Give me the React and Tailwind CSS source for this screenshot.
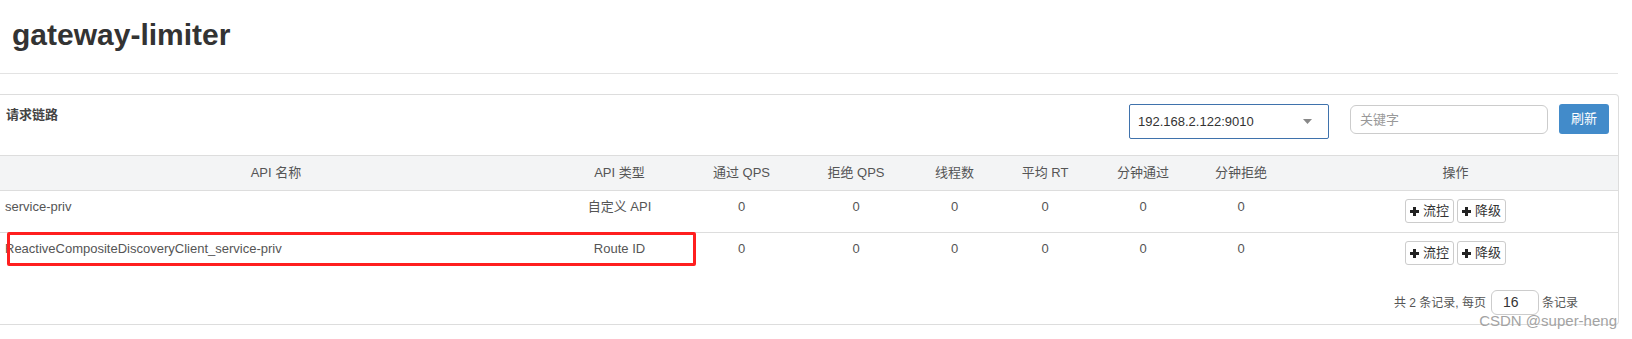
const columns = [
  { key: "name", label: "API 名称" },
  { key: "type", label: "API 类型" },
  { key: "passQps", label: "通过 QPS" },
  { key: "blockQps", label: "拒绝 QPS" },
  { key: "threads", label: "线程数" },
  { key: "rt", label: "平均 RT" },
  { key: "passMin", label: "分钟通过" },
  { key: "blockMin", label: "分钟拒绝" },
  { key: "ops", label: "操作" },
];

const rows = [
  { name: "service-priv", type: "自定义 API", passQps: 0, blockQps: 0, threads: 0, rt: 0, passMin: 0, blockMin: 0 },
  { name: "ReactiveCompositeDiscoveryClient_service-priv", type: "Route ID", passQps: 0, blockQps: 0, threads: 0, rt: 0, passMin: 0, blockMin: 0, marked: true },
];

const gridCols = "grid grid-cols-[552px_135px_109px_120px_77px_104px_92px_104px_1fr]";

function PlusIcon() {
  return (
    <svg width="9" height="9" viewBox="0 0 9 9" className="shrink-0">
      <rect x="3" y="0" width="3" height="9" fill="#222" />
      <rect x="0" y="3" width="9" height="3" fill="#222" />
    </svg>
  );
}

function OpButton({ label }) {
  return (
    <button className="h-[24px] w-[49px] flex items-center justify-center gap-[4px] border border-[#ccc] rounded-[3px] bg-white text-[13px] text-[#333]">
      <PlusIcon />
      <span>{label}</span>
    </button>
  );
}

export default function App() {
  return (
    <div className="relative w-[1632px] h-[339px] overflow-hidden bg-white font-['Liberation_Sans','Noto_Sans_CJK_SC',sans-serif]">
      <div className="h-[73px] pt-[18px] pl-[12px]">
        <h1 className="text-[30px] leading-[33px] font-bold text-[#333]">gateway-limiter</h1>
      </div>
      <div className="h-px w-[1618px] bg-[#e3e3e3]" />

      <div className="mt-[20px] w-[1619px] border border-l-0 border-[#ddd] rounded-r-[4px]">
        <div className="h-[60px] flex items-start justify-between pl-[6px] pr-[9px] pt-[9px]">
          <div className="mt-[2px] text-[13px] leading-[18px] font-bold text-[#444]">请求链路</div>
          <div className="flex items-start">
            <div className="w-[200px] h-[35px] border border-[#3f72ac] rounded-[2px] flex items-center justify-between pl-[8px] pr-[16px]">
              <span className="text-[13px] text-[#333]">192.168.2.122:9010</span>
              <svg width="9" height="5" viewBox="0 0 9 5"><path d="M0 0h9L4.5 5z" fill="#888" /></svg>
            </div>
            <div className="ml-[21px] mt-px w-[198px] h-[29px] border border-[#ccc] rounded-[6px] flex items-center pl-[9px]">
              <span className="text-[13px] text-[#999]">关键字</span>
            </div>
            <button className="ml-[11px] w-[50px] h-[30px] bg-[#428bca] rounded-[3px] text-white text-[13px]">刷新</button>
          </div>
        </div>

        <div className={`${gridCols} h-[36px] border-y border-[#ddd] bg-[#f3f4f5] text-[13px] text-[#555]`}>
          {columns.map((c) => (
            <div key={c.key} className="flex items-center justify-center">{c.label}</div>
          ))}
        </div>

        {rows.map((r, i) => (
          <div key={r.name} className={`relative ${gridCols} text-[13px] leading-[16px] text-[#555] ${i > 0 ? "border-t border-[#ddd]" : ""}`}>
            <div className="pl-[5px] pt-[8px]">{r.name}</div>
            <div className="text-center pt-[8px]">{r.type}</div>
            <div className="text-center pt-[8px]">{r.passQps}</div>
            <div className="text-center pt-[8px]">{r.blockQps}</div>
            <div className="text-center pt-[8px]">{r.threads}</div>
            <div className="text-center pt-[8px]">{r.rt}</div>
            <div className="text-center pt-[8px]">{r.passMin}</div>
            <div className="text-center pt-[8px]">{r.blockMin}</div>
            <div className="flex justify-center gap-[3px] pt-[8px] pb-[9px]">
              <OpButton label="流控" />
              <OpButton label="降级" />
            </div>
            {r.marked && (
              <div className="absolute left-[7px] top-[-1px] w-[689px] h-[34px] border-[3px] border-[#ff1f1f] rounded-[2px] pointer-events-none" />
            )}
          </div>
        ))}

        <div className="flex items-center justify-end pr-[40px] pt-[16px] pb-[9px] text-[12px] text-[#555]">
          <span>共 2 条记录, 每页</span>
          <div className="ml-[5px] mr-[3px] w-[48px] h-[25px] border border-[#ccc] rounded-[6px] flex items-center pl-[11px] text-[14px] text-[#333]">16</div>
          <span>条记录</span>
        </div>
      </div>

      <div className="absolute right-[15px] top-[312px] text-[15px] leading-[17px] text-[#a3a3a3]">CSDN @super-heng</div>
    </div>
  );
}
